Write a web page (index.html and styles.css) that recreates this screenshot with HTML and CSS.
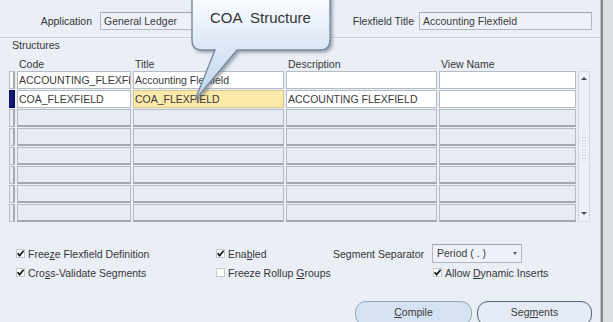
FILE: index.html
```html
<!DOCTYPE html>
<html>
<head>
<meta charset="utf-8">
<link rel="stylesheet" href="styles.css">
</head>
<body>
<div class="window">
  <div class="panel">
    <div class="top">
      <span class="lbl lbl-app">Application</span>
      <div class="field field-app">General Ledger</div>
      <span class="lbl lbl-title">Flexfield Title</span>
      <div class="field field-title">Accounting Flexfield</div>
    </div>
    <div class="sep"></div>
    <div class="section-label">Structures</div>

    <div class="grid">
      <div class="head"></div>
      <div class="head">Code</div>
      <div class="head">Title</div>
      <div class="head">Description</div>
      <div class="head">View Name</div>
      <div class="head"></div>

      <div class="ind ind-white"></div>
      <div class="cell white">ACCOUNTING_FLEXFIELD</div>
      <div class="cell white">Accounting Flexfield</div>
      <div class="cell white"></div>
      <div class="cell white"></div>
      <div class="scroll">
        <span class="arr arr-up"></span>
        <span class="grip"></span>
        <span class="arr arr-down"></span>
      </div>

      <div class="ind ind-current"></div>
      <div class="cell white">COA_FLEXFIELD</div>
      <div class="cell yellow">COA_FLEXFIELD</div>
      <div class="cell white">ACCOUNTING FLEXFIELD</div>
      <div class="cell white"></div>

      <div class="ind"></div><div class="cell"></div><div class="cell"></div><div class="cell"></div><div class="cell"></div>
      <div class="ind"></div><div class="cell"></div><div class="cell"></div><div class="cell"></div><div class="cell"></div>
      <div class="ind"></div><div class="cell"></div><div class="cell"></div><div class="cell"></div><div class="cell"></div>
      <div class="ind"></div><div class="cell"></div><div class="cell"></div><div class="cell"></div><div class="cell"></div>
      <div class="ind"></div><div class="cell"></div><div class="cell"></div><div class="cell"></div><div class="cell"></div>
      <div class="ind"></div><div class="cell"></div><div class="cell"></div><div class="cell"></div><div class="cell"></div>
    </div>

    <div class="options">
      <label class="chk"><svg class="box" width="9" height="9" viewBox="0 0 9 9"><rect x="0.5" y="0.5" width="8" height="8" fill="#fff" stroke="#c3c9d0"/><path d="M1.6 4.3 L3.6 6.6 L7.6 1.8" fill="none" stroke="#151515" stroke-width="1.7"/></svg><span>Free<u>z</u>e Flexfield Definition</span></label>
      <label class="chk"><svg class="box" width="9" height="9" viewBox="0 0 9 9"><rect x="0.5" y="0.5" width="8" height="8" fill="#fff" stroke="#c3c9d0"/><path d="M1.6 4.3 L3.6 6.6 L7.6 1.8" fill="none" stroke="#151515" stroke-width="1.7"/></svg><span>Ena<u>b</u>led</span></label>
      <span class="lbl lbl-sep">Segment Separator</span>
      <div class="select">Period ( . )<span class="sel-arr"></span></div>

      <label class="chk"><svg class="box" width="9" height="9" viewBox="0 0 9 9"><rect x="0.5" y="0.5" width="8" height="8" fill="#fff" stroke="#c3c9d0"/><path d="M1.6 4.3 L3.6 6.6 L7.6 1.8" fill="none" stroke="#151515" stroke-width="1.7"/></svg><span>Cro<u>s</u>s-Validate Segments</span></label>
      <label class="chk"><svg class="box" width="9" height="9" viewBox="0 0 9 9"><rect x="0.5" y="0.5" width="8" height="8" fill="#fff" stroke="#c3c9d0"/></svg><span>Freeze Rollup <u>G</u>roups</span></label>
      <span></span>
      <label class="chk chk-dyn"><svg class="box" width="9" height="9" viewBox="0 0 9 9"><rect x="0.5" y="0.5" width="8" height="8" fill="#fff" stroke="#c3c9d0"/><path d="M1.6 4.3 L3.6 6.6 L7.6 1.8" fill="none" stroke="#151515" stroke-width="1.7"/></svg><span>Allow <u>D</u>ynamic Inserts</span></label>
    </div>

    <div class="buttons">
      <button class="btn btn-compile"><u>C</u>ompile</button>
      <button class="btn btn-default">Seg<u>m</u>ents</button>
    </div>

    <svg class="bubble" width="160" height="110" viewBox="0 0 160 110">
      <defs>
        <linearGradient id="bg" x1="0" y1="0" x2="0" y2="100" gradientUnits="userSpaceOnUse">
          <stop offset="0" stop-color="#f8fbfe"/>
          <stop offset="0.45" stop-color="#dde9f6"/>
          <stop offset="1" stop-color="#bcd5ee"/>
        </linearGradient>
        <filter id="sh" x="-20%" y="-20%" width="140%" height="140%">
          <feDropShadow dx="2" dy="2" stdDeviation="1.6" flood-color="#3d4a5a" flood-opacity="0.45"/>
        </filter>
      </defs>
      <path d="M7,-20 L145,-20 L145,40 Q145,50 135,50 L52,50 L10,100 L30,50 L17,50 Q7,50 7,40 Z" fill="url(#bg)" stroke="#7c8b9d" stroke-width="1.4" filter="url(#sh)"/>
    </svg>
    <div class="bubble-text">COA  Structure</div>
  </div>
  <div class="frame"></div>
  <div class="outside"></div>
</div>
</body>
</html>
```
FILE: styles.css
```css
html, body {
  margin: 0;
  padding: 0;
}
body {
  background: #eaeff6;
  font-family: "Liberation Sans", Arial, sans-serif;
  font-size: 10.5px;
  color: #363636;
}
.window {
  display: flex;
  height: 322px;
  overflow: hidden;
}
.panel {
  position: relative;
  width: 600px;
  flex: none;
  padding-top: 12px;
  box-sizing: border-box;
}
.frame {
  width: 2px;
  flex: none;
  border-left: 1px solid #b9bdc2;
  background: #878b90;
}
.outside {
  flex: 1;
  background: #dcdfe3;
}

/* header */
.top {
  display: flex;
  align-items: center;
  height: 18px;
  padding-right: 8px;
}
.lbl-app {
  width: 92px;
  text-align: right;
  margin-right: 8px;
}
.lbl-title {
  margin-left: auto;
  margin-right: 5px;
}
.field {
  height: 18px;
  box-sizing: border-box;
  border: 1px solid #b0b7c0;
  border-top-color: #9ea5ae;
  background: #eef2f8;
  line-height: 16px;
  padding-left: 3px;
  color: #3a3a3a;
}
.field-app { width: 150px; }
.field-title { width: 173px; }

.sep {
  margin-top: 7px;
  height: 0;
  border-top: 1px solid #c9ced6;
  border-bottom: 1px solid #f7f9fc;
}
.section-label {
  height: 12px;
  line-height: 12px;
  padding-left: 12px;
}

/* table */
.grid {
  display: grid;
  grid-template-columns: 6px 114px 151px 151px 137px 12px;
  grid-template-rows: 12px repeat(8, 18px);
  column-gap: 2px;
  row-gap: 1px;
  margin-top: 7px;
  padding-left: 9px;
}
.head {
  line-height: 12px;
  padding-left: 2px;
  white-space: nowrap;
}
.ind {
  box-sizing: border-box;
  border: 1px solid #b7bdc5;
  border-right: 2px solid #a3aab3;
  background: #e7ecf3;
}
.ind-white {
  background: #f7f9fb;
}
.ind-current {
  background: #131a78;
  border-color: #0c1160;
}
.cell {
  box-sizing: border-box;
  border: 1px solid #b5bbc3;
  border-bottom: 2px solid #a1a8b1;
  background: #e7ecf3;
  line-height: 16px;
  padding-left: 1px;
  white-space: nowrap;
  overflow: hidden;
  color: #3a3a3a;
}
.cell.white {
  background: #ffffff;
  border-bottom: 1px solid #b5bbc3;
}
.cell.yellow {
  background: #fce9a9;
  border-color: #d9c98f;
  border-bottom: 1px solid #d9c98f;
}
.scroll {
  grid-column: 6;
  grid-row: 2 / span 8;
  box-sizing: border-box;
  border: 1px solid #d3d8df;
  background: #edf1f7;
  display: flex;
  flex-direction: column;
  align-items: center;
  padding: 5px 0 6px;
}
.arr {
  width: 0;
  height: 0;
  border-left: 3px solid transparent;
  border-right: 3px solid transparent;
}
.arr-up { border-bottom: 3px solid #4a4f55; }
.arr-down {
  border-top: 3px solid #4a4f55;
  margin-top: auto;
}
.grip {
  width: 6px;
  height: 32px;
  margin-top: 50px;
  background-image: radial-gradient(circle, #c3c8cf 0.7px, transparent 0.9px);
  background-size: 3px 3px;
}

/* options */
.options {
  display: grid;
  grid-template-columns: 200px 117px 95px 1fr;
  grid-template-rows: 19px 19px;
  margin-top: 22px;
  padding-left: 16px;
  align-items: center;
}
.chk {
  display: flex;
  align-items: center;
  white-space: nowrap;
}
.box {
  flex: none;
  margin-right: 3px;
}
.chk-dyn {
  margin-left: 5px;
}
.lbl-sep {
  text-align: right;
  padding-right: 9px;
  white-space: nowrap;
}
.select {
  position: relative;
  width: 90px;
  height: 19px;
  box-sizing: border-box;
  margin-left: 4px;
  border: 1px solid #b0b7c0;
  border-top-color: #9ea5ae;
  background: #eef2f8;
  line-height: 17px;
  padding-left: 4px;
  color: #3a3a3a;
}
.sel-arr {
  position: absolute;
  right: 4px;
  top: 7px;
  width: 0;
  height: 0;
  border-left: 2.5px solid transparent;
  border-right: 2.5px solid transparent;
  border-top: 3px solid #5a5f66;
}

/* buttons */
.buttons {
  display: flex;
  justify-content: flex-end;
  gap: 5px;
  margin-top: 19px;
  padding-right: 8px;
}
.btn {
  height: 25px;
  box-sizing: border-box;
  border-radius: 11px;
  font-family: "Liberation Sans", Arial, sans-serif;
  font-size: 10.5px;
  color: #3a3a3a;
  padding: 0 0 3px;
  line-height: 18px;
  align-self: flex-start;
}
.btn-compile {
  width: 117px;
  border: 1px solid #97a6b7;
  background: #d4e2f1;
}
.btn-default {
  width: 115px;
  border: 1.5px solid #55667b;
  background: #e4ebf5;
}

/* callout */
.bubble {
  position: absolute;
  left: 185px;
  top: 0;
  overflow: visible;
}
.bubble-text {
  position: absolute;
  left: 210px;
  top: 9px;
  font-size: 15px;
  line-height: 18px;
  white-space: pre;
  color: #353535;
}
```
